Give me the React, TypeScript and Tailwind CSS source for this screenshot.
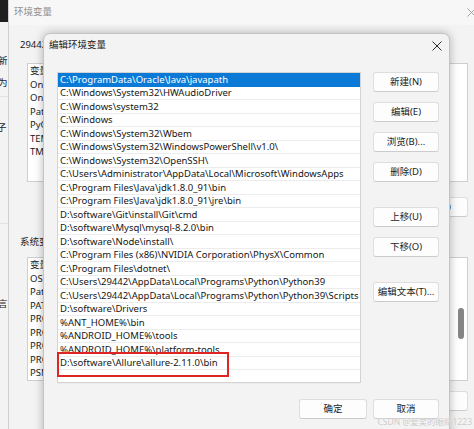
import React from "react";

const paths = [
  "C:\\ProgramData\\Oracle\\Java\\javapath",
  "C:\\Windows\\System32\\HWAudioDriver",
  "C:\\Windows\\system32",
  "C:\\Windows",
  "C:\\Windows\\System32\\Wbem",
  "C:\\Windows\\System32\\WindowsPowerShell\\v1.0\\",
  "C:\\Windows\\System32\\OpenSSH\\",
  "C:\\Users\\Administrator\\AppData\\Local\\Microsoft\\WindowsApps",
  "C:\\Program Files\\Java\\jdk1.8.0_91\\bin",
  "C:\\Program Files\\Java\\jdk1.8.0_91\\jre\\bin",
  "D:\\software\\Git\\install\\Git\\cmd",
  "D:\\software\\Mysql\\mysql-8.2.0\\bin",
  "D:\\software\\Node\\install\\",
  "C:\\Program Files (x86)\\NVIDIA Corporation\\PhysX\\Common",
  "C:\\Program Files\\dotnet\\",
  "C:\\Users\\29442\\AppData\\Local\\Programs\\Python\\Python39",
  "C:\\Users\\29442\\AppData\\Local\\Programs\\Python\\Python39\\Scripts",
  "D:\\software\\Drivers",
  "%ANT_HOME%\\bin",
  "%ANDROID_HOME%\\tools",
  "%ANDROID_HOME%\\platform-tools",
  "D:\\software\\Allure\\allure-2.11.0\\bin",
  "",
];

const userVars = ["变量", "OneDrive", "OneDriveConsumer", "Path", "PyCharm Community Edition", "TEMP", "TMP"];
const sysVars = [
  "变量",
  "OS",
  "Path",
  "PATHEXT",
  "PROCESSOR_ARCHITECTURE",
  "PROCESSOR_IDENTIFIER",
  "PROCESSOR_LEVEL",
  "PROCESSOR_REVISION",
  "PSModulePath",
];

function Btn({ label, className = "" }: { label: string; className?: string }) {
  return (
    <div
      className={
        "h-[20px] w-[66px] flex items-center justify-center rounded-[3px] border border-[#dedede] border-b-[#cccccc] bg-[#fdfdfd] text-[9.5px] leading-none text-[#1b1b1b] " +
        className
      }
    >
      {label}
    </div>
  );
}

function CloseX({ size = 10, color = "#333" }: { size?: number; color?: string }) {
  return (
    <svg width={size} height={size} viewBox="0 0 10 10">
      <path d="M0.5 0.5 L9.5 9.5 M9.5 0.5 L0.5 9.5" stroke={color} strokeWidth="1" fill="none" />
    </svg>
  );
}

export default function App() {
  return (
    <div className="relative w-[474px] h-[429px] overflow-hidden bg-[#f3f3f3] font-['Noto_Sans','Noto_Sans_CJK_SC',sans-serif]">
      {/* far-left window behind */}
      <div className="absolute left-0 top-0 w-[8px] h-full overflow-hidden flex flex-col bg-[#f3f3f3] text-[9.5px] leading-none text-[#222]">
        <div className="h-[22px] w-[8px] bg-[#1f1f1f]" />
        <div className="mt-[34px] -ml-[2px] h-[10px]">新</div>
        <div className="mt-[12px] -ml-[2px] h-[10px]">为</div>
        <div className="mt-[8px] h-px bg-[#e2e2e2]" />
        <div className="mt-[26px] -ml-[3px] h-[10px]">子</div>
        <div className="mt-[90px] h-px bg-[#e2e2e2]" />
        <div className="mt-[75px] -ml-[2px] h-[10px]">言</div>
      </div>

      {/* background window 环境变量 */}
      <div className="absolute left-[8px] top-0 w-[490px] h-[440px] border-l border-[#d0d0d0] bg-[#f3f3f3] flex flex-col">
        <div className="h-[25px] flex items-center justify-between pl-[5px] pr-[22px] bg-[#f7f7f7] text-[9.5px] text-[#8f8f8f]">
          <span>环境变量</span>
          <CloseX size={9} color="#999" />
        </div>
        <div className="mt-[14px] ml-[11px] h-[12px] flex items-center text-[9.5px] leading-none text-[#1b1b1b]">
          29442 的用户变量(U)
        </div>
        <div className="mt-[12px] ml-[18px] w-[441px] h-[119px] border border-[#cfcfcf] bg-white flex flex-col">
          {userVars.map((v, i) => (
            <div key={i} className="h-[13.5px] shrink-0 flex items-center pl-[2px] text-[9.5px] leading-none text-[#1b1b1b]">
              {v}
            </div>
          ))}
        </div>
        <div className="mt-[15px] ml-[18px] w-[441px] flex justify-end gap-[6px]">
          <Btn label="新建(N)..." className="h-[19px]" />
          <Btn label="编辑(E)..." className="h-[19px]" />
          <Btn label="删除(D)" className="h-[19px]" />
        </div>
        <div className="mt-[19px] ml-[11px] h-[12px] flex items-center text-[9.5px] leading-none text-[#1b1b1b]">
          系统变量(S)
        </div>
        <div className="mt-[9px] ml-[18px] w-[441px] h-[124px] border border-[#cfcfcf] bg-white flex">
          <div className="flex-1 flex flex-col">
            {sysVars.map((v, i) => (
              <div key={i} className="h-[13.5px] shrink-0 flex items-center pl-[2px] text-[9.5px] leading-none text-[#1b1b1b]">
                {v}
              </div>
            ))}
          </div>
          <div className="w-[12px] flex flex-col items-center">
            <div className="mt-[50px] w-[6px] h-[31px] rounded-[3px] bg-[#858585]" />
          </div>
        </div>
        <div className="mt-[10px] ml-[18px] w-[441px] flex justify-end gap-[6px]">
          <Btn label="新建(W)..." className="h-[19px]" />
          <Btn label="编辑(I)..." className="h-[19px]" />
          <Btn label="删除(L)" className="h-[19px]" />
        </div>
      </div>

      {/* dialog 编辑环境变量 */}
      <div className="absolute left-[43px] top-[33px] w-[407px] h-[420px] rounded-t-[7px] border border-[#c4c4c4] bg-[#f3f3f3] shadow-[0_0_10px_rgba(0,0,0,0.28)] flex flex-col">
        <div className="h-[25px] flex items-start justify-between pl-[5px] pr-[7px] pt-[5px]">
          <span className="text-[9.5px] leading-[12px] text-[#1b1b1b]">编辑环境变量</span>
          <div className="pt-[2px]">
            <CloseX size={10} color="#2b2b2b" />
          </div>
        </div>
        <div className="flex pl-[13px] pt-[13px] gap-[12px]">
          <div className="relative w-[304px] h-[311px] border border-[#d3d3d3] bg-white flex flex-col overflow-visible">
            {paths.map((p, i) => (
              <div
                key={i}
                className={
                  "h-[13.5px] shrink-0 flex items-center pl-[2px] text-[9.5px] leading-none whitespace-nowrap " +
                  (i === 0 ? "bg-[#0a7ad6] text-white" : "text-[#161616] border-b border-[#ececec]")
                }
              >
                {p}
              </div>
            ))}
            <div className="absolute left-[-1px] top-[279px] w-[172px] h-[25px] border-[2px] border-[#e02424]" />
          </div>
          <div className="flex flex-col">
            <Btn label="新建(N)" />
            <Btn label="编辑(E)" className="mt-[10px]" />
            <Btn label="浏览(B)..." className="mt-[10px]" />
            <Btn label="删除(D)" className="mt-[10px]" />
            <Btn label="上移(U)" className="mt-[25px]" />
            <Btn label="下移(O)" className="mt-[10px]" />
            <Btn label="编辑文本(T)..." className="mt-[25px]" />
          </div>
        </div>
        <div className="mt-[16px] flex justify-end gap-[6px] pr-[10px]">
          <Btn label="确定" className="w-[68px] border-[#6aa9dc] border-b-[#6aa9dc]" />
          <Btn label="取消" />
        </div>
      </div>

      {/* watermark */}
      <div className="absolute right-[2px] bottom-[3px] text-[8.5px] leading-none text-[#c9c9c9] [text-shadow:0_0_1px_#ffffff]">
        CSDN @爱笑的眼睛1223
      </div>
    </div>
  );
}
